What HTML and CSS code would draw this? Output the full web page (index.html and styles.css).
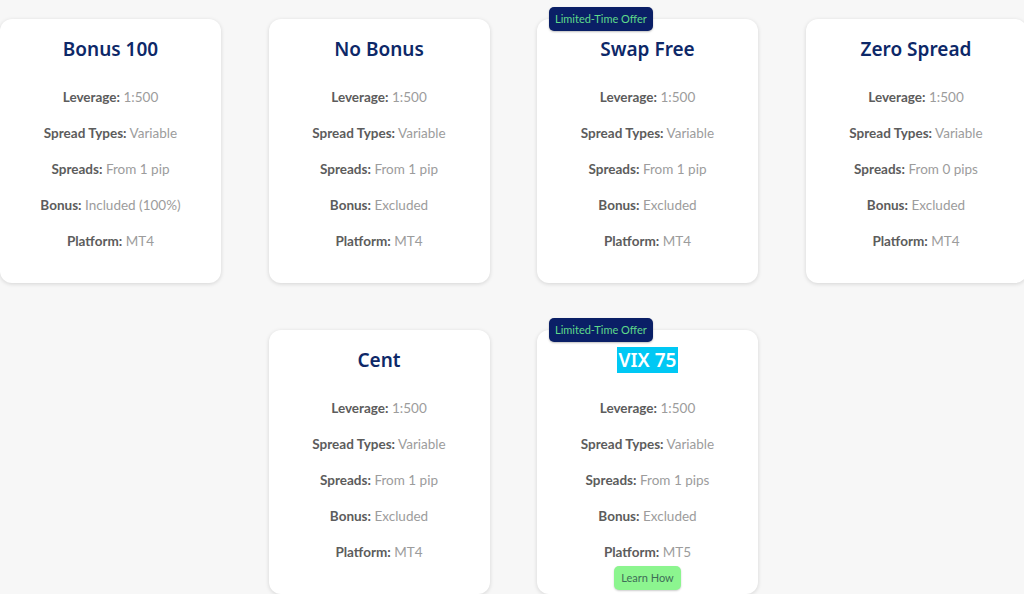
FILE: index.html
```html
<!DOCTYPE html>
<html lang="en">
<head>
<meta charset="utf-8">
<title>Account Types</title>
<link rel="stylesheet" href="styles.css">
</head>
<body>
<main class="grid">
  <section class="card">
    <h2 class="title">Bonus 100</h2>
    <ul class="rows">
      <li><b>Leverage:</b> 1:500</li>
      <li><b>Spread Types:</b> Variable</li>
      <li><b>Spreads:</b> From 1 pip</li>
      <li><b>Bonus:</b> Included (100%)</li>
      <li><b>Platform:</b> MT4</li>
    </ul>
    <div class="foot"></div>
  </section>
  <section class="card">
    <h2 class="title">No Bonus</h2>
    <ul class="rows">
      <li><b>Leverage:</b> 1:500</li>
      <li><b>Spread Types:</b> Variable</li>
      <li><b>Spreads:</b> From 1 pip</li>
      <li><b>Bonus:</b> Excluded</li>
      <li><b>Platform:</b> MT4</li>
    </ul>
    <div class="foot"></div>
  </section>
  <section class="card">
    <span class="badge">Limited-Time Offer</span>
    <h2 class="title">Swap Free</h2>
    <ul class="rows">
      <li><b>Leverage:</b> 1:500</li>
      <li><b>Spread Types:</b> Variable</li>
      <li><b>Spreads:</b> From 1 pip</li>
      <li><b>Bonus:</b> Excluded</li>
      <li><b>Platform:</b> MT4</li>
    </ul>
    <div class="foot"></div>
  </section>
  <section class="card">
    <h2 class="title">Zero Spread</h2>
    <ul class="rows">
      <li><b>Leverage:</b> 1:500</li>
      <li><b>Spread Types:</b> Variable</li>
      <li><b>Spreads:</b> From 0 pips</li>
      <li><b>Bonus:</b> Excluded</li>
      <li><b>Platform:</b> MT4</li>
    </ul>
    <div class="foot"></div>
  </section>
  <section class="card">
    <h2 class="title">Cent</h2>
    <ul class="rows">
      <li><b>Leverage:</b> 1:500</li>
      <li><b>Spread Types:</b> Variable</li>
      <li><b>Spreads:</b> From 1 pip</li>
      <li><b>Bonus:</b> Excluded</li>
      <li><b>Platform:</b> MT4</li>
    </ul>
    <div class="foot"></div>
  </section>
  <section class="card">
    <span class="badge">Limited-Time Offer</span>
    <h2 class="title"><span class="hl">VIX 75</span></h2>
    <ul class="rows">
      <li><b>Leverage:</b> 1:500</li>
      <li><b>Spread Types:</b> Variable</li>
      <li><b>Spreads:</b> From 1 pips</li>
      <li><b>Bonus:</b> Excluded</li>
      <li><b>Platform:</b> MT5</li>
    </ul>
    <div class="foot"><a class="btn" href="#">Learn How</a></div>
  </section>
</main>
</body>
</html>
```

FILE: styles.css
```css
html, body {
  margin: 0;
  padding: 0;
  overflow: hidden;
  background: #f7f7f7;
}

body {
  font-family: Lato, "Liberation Sans", sans-serif;
}

.grid {
  width: 1026.5px;
  display: flex;
  flex-wrap: wrap;
  justify-content: center;
  column-gap: 47.5px;
  row-gap: 47px;
  padding-top: 19px;
}

.card {
  position: relative;
  width: 221px;
  box-sizing: border-box;
  background: #ffffff;
  border-radius: 12px;
  box-shadow: 0 1px 4px rgba(0, 0, 0, 0.14);
  padding: 18px 10px 0;
  display: flex;
  flex-direction: column;
  align-items: center;
}

.title {
  margin: 0;
  font-family: "Noto Sans", "Open Sans", sans-serif;
  font-weight: 600;
  font-size: 19px;
  line-height: 24px;
  color: #0d2868;
  text-align: center;
}

.hl {
  background: #00c8f4;
  color: #ffffff;
  padding: 0 2px;
}

.rows {
  list-style: none;
  margin: 26px 0 0;
  padding: 0;
  display: flex;
  flex-direction: column;
  align-items: center;
  gap: 16px;
}

.rows li {
  font-size: 13.5px;
  line-height: 20px;
  color: #9c9c9c;
  white-space: nowrap;
}

.rows b {
  color: #5c5c5c;
  font-weight: 700;
}

.foot {
  height: 32px;
  padding-top: 4px;
  box-sizing: border-box;
  display: flex;
  justify-content: center;
}

.btn {
  display: inline-block;
  height: 24px;
  line-height: 24px;
  padding: 0 7px;
  font-size: 11px;
  color: #3f6e57;
  background: #8cf58f;
  border-radius: 5px;
  box-shadow: 0 1px 2px rgba(0, 0, 0, 0.2);
  text-decoration: none;
}

.badge {
  position: absolute;
  top: -12px;
  left: 12px;
  height: 24px;
  line-height: 24px;
  padding: 0 6px;
  font-size: 11px;
  color: #5fd98a;
  background: #0a1f66;
  border-radius: 5px;
  box-shadow: 0 1px 2px rgba(0, 0, 0, 0.25);
  white-space: nowrap;
}
```
